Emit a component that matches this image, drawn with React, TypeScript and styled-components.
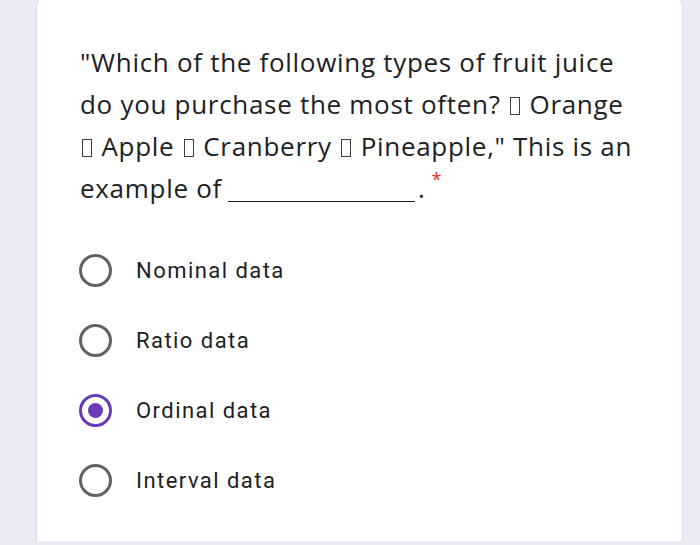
import React from "react";
import styled, { createGlobalStyle } from "styled-components";

const GlobalStyle = createGlobalStyle`
  html, body {
    margin: 0;
    padding: 0;
    background: #ede9f7;
    overflow: hidden;
  }
`;

const Page = styled.div`
  width: 700px;
  height: 545px;
  background: #ede9f7;
  padding-left: 36px;
  box-sizing: border-box;
`;

const Card = styled.div`
  width: 647px;
  height: 560px;
  margin-top: -4px;
  background: #fff;
  border: 1px solid #dcdbe3;
  border-radius: 10px;
  box-sizing: border-box;
  padding: 44px 0 0 43px;
`;

const Question = styled.div`
  font-family: "Open Sans", "DejaVu Sans", sans-serif;
  font-size: 26px;
  line-height: 42px;
  color: #202124;
  letter-spacing: 0.7px;
`;

const Line = styled.div`
  height: 42px;
  white-space: nowrap;
`;

const Box = styled.span`
  display: inline-block;
  width: 10px;
  height: 18px;
  border: 1.5px solid #3c4043;
  box-sizing: border-box;
  margin: 0 2px;
  vertical-align: -1px;
`;

const Blank = styled.span`
  display: inline-block;
  width: 187px;
  margin-left: 6px;
  margin-right: 3px;
  border-bottom: 1.5px solid #202124;
  height: 1px;
  vertical-align: -4px;
`;

const Required = styled.span`
  display: inline-block;
  color: #d93025;
  margin-left: 6px;
  font-size: 18px;
  line-height: 18px;
  vertical-align: 12px;
`;

const Options = styled.div`
  margin-top: 26px;
  display: flex;
  flex-direction: column;
`;

const Option = styled.label`
  display: flex;
  align-items: center;
  height: 70px;
  margin-left: -1px;
  font-family: Roboto, "Liberation Sans", sans-serif;
  font-size: 22px;
  letter-spacing: 1.45px;
  color: #202124;
`;

const Radio = styled.span<{ $checked?: boolean }>`
  flex: none;
  width: 33px;
  height: 33px;
  box-sizing: border-box;
  border-radius: 50%;
  border: 3.5px solid ${(p) => (p.$checked ? "#673ab7" : "#5f6368")};
  margin-right: 24px;
  display: flex;
  align-items: center;
  justify-content: center;
  &::after {
    content: "";
    display: ${(p) => (p.$checked ? "block" : "none")};
    width: 15px;
    height: 15px;
    border-radius: 50%;
    background: #673ab7;
  }
`;

const choices = ["Nominal data", "Ratio data", "Ordinal data", "Interval data"];

export default function App() {
  return (
    <>
      <GlobalStyle />
      <Page>
        <Card>
          <Question>
            <Line>"Which of the following types of fruit juice</Line>
            <Line>
              do you purchase the most often? <Box /> Orange
            </Line>
            <Line>
              <Box /> Apple <Box /> Cranberry <Box /> Pineapple," This is an
            </Line>
            <Line>
              example of
              <Blank />.
              <Required>*</Required>
            </Line>
          </Question>
          <Options>
            {choices.map((c) => (
              <Option key={c}>
                <Radio $checked={c === "Ordinal data"} />
                {c}
              </Option>
            ))}
          </Options>
        </Card>
      </Page>
    </>
  );
}
